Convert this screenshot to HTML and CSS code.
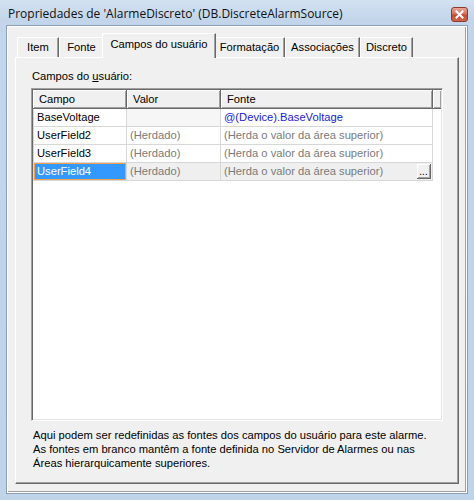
FILE: index.html
```html
<!DOCTYPE html>
<html lang="pt">
<head>
<meta charset="utf-8">
<title>Propriedades</title>
<link rel="stylesheet" href="styles.css">
</head>
<body>
<div class="window">
  <div class="titlebar">
    <span class="title">Propriedades de 'AlarmeDiscreto' (DB.DiscreteAlarmSource)</span>
    <div class="close">
      <svg width="17" height="15" viewBox="0 0 17 15">
        <path d="M5.5 4.5 L11.5 10.5 M11.5 4.5 L5.5 10.5" stroke="#fff" stroke-width="2" stroke-linecap="square"/>
      </svg>
    </div>
  </div>
  <div class="client">
    <div class="tabs">
      <div class="tab tab-item">Item</div>
      <div class="tab tab-fonte">Fonte</div>
      <div class="tab tab-campos selected">Campos do usuário</div>
      <div class="tab tab-form">Formatação</div>
      <div class="tab tab-assoc">Associações</div>
      <div class="tab tab-disc">Discreto</div>
    </div>
    <div class="panel">
      <div class="label">Campos do <u>u</u>suário:</div>
      <div class="grid">
        <div class="row head">
          <div class="cell c1">Campo</div>
          <div class="cell c2">Valor</div>
          <div class="cell c3">Fonte</div>
          <div class="cell c4"></div>
        </div>
        <div class="row">
          <div class="cell c1">BaseVoltage</div>
          <div class="cell c2 ro"></div>
          <div class="cell c3 link">@(Device).BaseVoltage</div>
        </div>
        <div class="row">
          <div class="cell c1">UserField2</div>
          <div class="cell c2 dim">(Herdado)</div>
          <div class="cell c3 dim">(Herda o valor da área superior)</div>
        </div>
        <div class="row">
          <div class="cell c1">UserField3</div>
          <div class="cell c2 dim">(Herdado)</div>
          <div class="cell c3 dim">(Herda o valor da área superior)</div>
        </div>
        <div class="row sel">
          <div class="cell c1"><span class="focus">UserField4</span></div>
          <div class="cell c2 dim">(Herdado)</div>
          <div class="cell c3 dim">(Herda o valor da área superior)<span class="dots">...</span></div>
        </div>
      </div>
      <p class="note">
        <span class="line">Aqui podem ser redefinidas as fontes dos campos do usuário para este alarme.</span>
        <span class="line">As fontes em branco mantêm a fonte definida no Servidor de Alarmes ou nas</span>
        <span class="line">Áreas hierarquicamente superiores.</span>
      </p>
    </div>
  </div>
</div>
</body>
</html>
```

FILE: styles.css
```css
html, body {
  margin: 0;
  padding: 0;
}
body {
  width: 474px;
  height: 500px;
  overflow: hidden;
  font-family: "Liberation Sans", Arial, sans-serif;
  font-size: 11.2px;
  color: #000;
}
.window {
  width: 474px;
  height: 500px;
  box-sizing: border-box;
  display: flex;
  flex-direction: column;
  background: linear-gradient(180deg, #d3e2f2 0px, #c2d5ea 20px, #bfd3e9 100%);
}
.titlebar {
  height: 25px;
  flex: none;
  display: flex;
  align-items: center;
  justify-content: space-between;
  padding: 0 6px 0 8px;
}
.title {
  font-family: "Open Sans", "Noto Sans", sans-serif;
  font-size: 12px;
  color: #111;
  margin-top: 2px;
}
.close {
  width: 17px;
  height: 15px;
  margin-top: 4px;
  box-sizing: border-box;
  border: 1px solid #8a3b2e;
  border-radius: 3px;
  background: linear-gradient(180deg, #e9a597 0%, #d6705d 45%, #c44b33 55%, #d1664c 100%);
  display: flex;
  align-items: center;
  justify-content: center;
}
.close svg {
  display: block;
  margin: -1px;
}
.client {
  flex: 1;
  margin: 0 6px 6px 6px;
  border: 1px solid #8b9fb7;
  background: #f0f0f0;
  box-shadow: inset 1px 1px 0 #ffffff, inset -1px -1px 0 #ffffff, inset -2px -2px 0 #a0a0a0;
  padding: 7px 8px 0 8px;
  display: flex;
  flex-direction: column;
}
.tabs {
  height: 24px;
  display: flex;
  align-items: flex-end;
  padding-left: 2px;
  position: relative;
  z-index: 1;
}
.tab {
  height: 20px;
  box-sizing: border-box;
  border-top: 1px solid #fff;
  border-left: 1px solid #fff;
  border-right: 1px solid #696969;
  box-shadow: inset -1px 0 0 #a0a0a0;
  text-align: center;
  line-height: 19px;
  white-space: nowrap;
  background: #f0f0f0;
}
.tab-item { width: 42px; }
.tab-fonte { width: 45px; }
.tab-campos { width: 114px; }
.tab-form { width: 71px; }
.tab-assoc { width: 75px; }
.tab-disc { width: 53px; }
.tab.selected {
  height: 25px;
  margin: 0 -2px -1px -2px;
  line-height: 21px;
  position: relative;
  z-index: 2;
}
.panel {
  width: 444px;
  height: 427px;
  box-sizing: border-box;
  border-top: 1px solid #fff;
  border-left: 1px solid #fff;
  border-right: 1px solid #696969;
  border-bottom: 1px solid #696969;
  box-shadow: inset -1px -1px 0 #a0a0a0;
  padding: 12px 0 0 15px;
}
.label {
  height: 13px;
  line-height: 13px;
  padding-left: 1px;
}
.grid {
  margin-top: 5px;
  width: 412px;
  height: 333px;
  box-sizing: border-box;
  border: 1px solid;
  border-color: #a0a0a0 #ffffff #ffffff #a0a0a0;
  box-shadow: inset 1px 1px 0 #696969, inset -1px -1px 0 #e3e3e3;
  background: #fff;
  padding: 1px;
}
.row {
  display: flex;
  height: 18px;
}
.cell {
  box-sizing: border-box;
  height: 18px;
  line-height: 17px;
  white-space: nowrap;
  overflow: hidden;
  border-right: 1px solid #d7d7d7;
  border-bottom: 1px solid #d7d7d7;
  padding-left: 3px;
  position: relative;
}
.c1 { width: 94px; border-left: 1px solid #d7d7d7; }
.c2 { width: 94px; }
.c3 { width: 212px; }
.c4 { width: 8px; }
.head {
  height: 19px;
}
.head .cell {
  height: 19px;
  line-height: 18px;
  background: #f0f0f0;
  border-left: 0;
  border-right: 1px solid #696969;
  border-bottom: 1px solid #696969;
  box-shadow: inset 1px 1px 0 #fff, inset -1px -1px 0 #a0a0a0;
  padding-left: 6px;
}
.head .c4 { border-right: 0; }
.ro { background: #f6f6f6; }
.dim { color: #7a7a7a; }
.link { color: #1a1ad8; }
.sel .c2, .sel .c3 { background: #efefef; }
.sel .c1 { padding: 0; }
.focus {
  display: block;
  height: 17px;
  box-sizing: border-box;
  border: 1px solid #f0a050;
  background: #3399ff;
  color: #fff;
  padding-left: 2px;
  line-height: 15px;
}
.dots {
  position: absolute;
  right: 1px;
  top: 1px;
  width: 14px;
  height: 15px;
  box-sizing: border-box;
  background: #f0f0f0;
  border-right: 1px solid #696969;
  border-bottom: 1px solid #696969;
  box-shadow: inset 1px 1px 0 #fff, inset -1px -1px 0 #a0a0a0;
  color: #000;
  font-size: 10px;
  line-height: 16px;
  text-align: center;
  padding: 0;
}
.note {
  margin: 7px 0 0 2px;
  line-height: 14px;
}
.line {
  display: block;
  white-space: nowrap;
}
```
